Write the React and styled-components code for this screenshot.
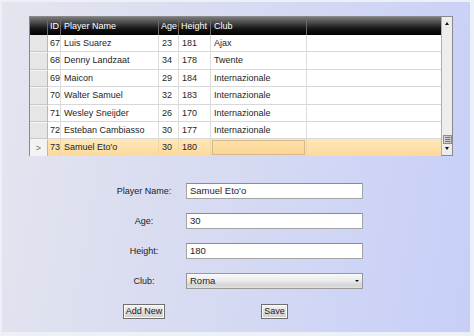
import React from "react";
import styled, { createGlobalStyle } from "styled-components";

const Global = createGlobalStyle`
  html, body { margin: 0; padding: 0; background: #eef0f8; }
  body { font-family: "Liberation Sans", Arial, sans-serif; }
  * { box-sizing: border-box; }
`;

const Panel = styled.div`
  margin: 2px 4px 0 2px;
  height: 330px;
  padding: 14px 0 0 27px;
  background: linear-gradient(100deg, #e4e5ee 0%, #d6daf2 50%, #c7cff8 100%);
`;

const Grid = styled.div`
  width: 424px;
  height: 140px;
  border: 1px solid #8a8a8a;
  display: flex;
  background: #fff;
`;

const Body = styled.div`
  flex: 1;
  display: flex;
  flex-direction: column;
`;

const COLS = "18px 13px 98px 20px 32px 96px 1fr";

const HeaderRow = styled.div`
  display: grid;
  grid-template-columns: ${COLS};
  height: 18px;
  background: linear-gradient(#7a7a7a 0%, #444 35%, #161616 65%, #000 100%);
`;

const HeadCell = styled.div`
  border-right: 1px solid #6a6a6a;
  color: #fff;
  font-size: 9px;
  line-height: 18px;
  padding-left: ${(p) => (p.$tight ? 2 : 3)}px;
  white-space: nowrap;
  overflow: hidden;
  &:last-child { border-right: none; }
`;

const Row = styled.div`
  display: grid;
  grid-template-columns: ${COLS};
  height: 17.4px;
  border-bottom: 1px solid ${(p) => (p.$sel ? "#f2d49c" : "#d8d8d8")};
  background: ${(p) => (p.$sel ? "linear-gradient(#fee7b8, #fcd99c)" : "#fff")};
  &:last-child { border-bottom: none; }
`;

const Cell = styled.div`
  border-right: 1px solid ${(p) => (p.$sel ? "#f0d7a6" : "#dcdcdc")};
  color: #1e1e1e;
  font-size: 9px;
  line-height: 16.4px;
  padding-left: ${(p) => (p.$tight ? 2 : 3)}px;
  white-space: nowrap;
  overflow: hidden;
  &:last-child { border-right: none; }
`;

const EditCell = styled(Cell)`
  padding: 0;
`;

const RowHead = styled.div`
  border-right: 1px solid #b8b8b8;
  border-top: ${(p) => (p.$first ? "none" : "1px solid #f6f6f6")};
  background: ${(p) => (p.$sel ? "#f3f3f3" : "#e6e6e6")};
  color: #6a6a6a;
  font-size: 9px;
  line-height: 16px;
  text-align: center;
  margin-bottom: ${(p) => (p.$sel ? 0 : "-1px")};
  border-bottom: ${(p) => (p.$sel ? "none" : "1px solid #c8c8c8")};
`;

const EditBox = styled.div`
  margin: 1px 1px 0 1px;
  height: 15px;
  border: 1px solid #d6b986;
  background: linear-gradient(#fde0a8, #fbd696);
`;

const Scroll = styled.div`
  width: 11px;
  border-left: 1px solid #b0b0b0;
  background: #ededed;
  display: flex;
  flex-direction: column;
  align-items: center;
`;

const Arrow = styled.div`
  width: 0;
  height: 0;
  border-left: 2.5px solid transparent;
  border-right: 2.5px solid transparent;
  ${(p) =>
    p.$up
      ? "border-bottom: 3px solid #111; margin-top: 5px;"
      : "border-top: 3px solid #111; margin-top: 3px; margin-bottom: 5px;"}
`;

const Track = styled.div`
  flex: 1;
`;

const Thumb = styled.div`
  width: 9px;
  height: 9px;
  border: 1px solid #8e8e8e;
  background: linear-gradient(90deg, #d8d8d8, #bdbdbd);
  display: flex;
  flex-direction: column;
  justify-content: center;
  gap: 1px;
  padding: 0 1px;
  span { display: block; height: 1px; background: #777; }
`;

const Form = styled.div`
  margin: 27px 0 0 85px;
  display: grid;
  grid-template-columns: 60px 177px;
  column-gap: 12px;
  row-gap: 14px;
  align-items: center;
`;

const Label = styled.div`
  font-size: 9px;
  color: #222;
  text-align: center;
  height: 16px;
  line-height: 16px;
`;

const Input = styled.div`
  height: 16px;
  border: 1px solid #a4a4a4;
  border-top-color: #8c8c8c;
  background: #fff;
  font-size: 9.5px;
  line-height: 14px;
  padding-left: 3px;
  color: #1e1e1e;
`;

const Select = styled.div`
  height: 16px;
  border: 1px solid #999;
  background: linear-gradient(#fafafa 0%, #ececec 45%, #d4d4d4 80%, #e2e2e2 100%);
  font-size: 9.5px;
  line-height: 14px;
  padding-left: 3px;
  color: #1e1e1e;
  display: flex;
  justify-content: space-between;
  align-items: center;
  padding-right: 3px;
`;

const Caret = styled.div`
  width: 0;
  height: 0;
  border-left: 2px solid transparent;
  border-right: 2px solid transparent;
  border-top: 2px solid #111;
`;

const ButtonCell = styled.div`
  display: flex;
  justify-content: center;
  margin-top: 1px;
`;

const Button = styled.div`
  height: 15px;
  padding: 0 2px;
  border: 1px solid #707070;
  background: linear-gradient(#f6f6f6, #dedede 50%, #cfcfcf);
  font-size: 9px;
  line-height: 13px;
  color: #222;
  box-shadow: inset 0 0 0 1px #fafafa;
`;

const players = [
  [67, "Luis Suarez", 23, 181, "Ajax"],
  [68, "Denny Landzaat", 34, 178, "Twente"],
  [69, "Maicon", 29, 184, "Internazionale"],
  [70, "Walter Samuel", 32, 183, "Internazionale"],
  [71, "Wesley Sneijder", 26, 170, "Internazionale"],
  [72, "Esteban Cambiasso", 30, 177, "Internazionale"],
];

export default function App() {
  return (
    <>
      <Global />
      <Panel>
        <Grid>
          <Body>
            <HeaderRow>
              <HeadCell />
              <HeadCell $tight>ID</HeadCell>
              <HeadCell>Player Name</HeadCell>
              <HeadCell $tight>Age</HeadCell>
              <HeadCell $tight>Height</HeadCell>
              <HeadCell>Club</HeadCell>
              <HeadCell />
            </HeaderRow>
            {players.map((p, i) => (
              <Row key={p[0]}>
                <RowHead $first={i === 0} />
                <Cell $tight>{p[0]}</Cell>
                <Cell>{p[1]}</Cell>
                <Cell>{p[2]}</Cell>
                <Cell>{p[3]}</Cell>
                <Cell>{p[4]}</Cell>
                <Cell />
              </Row>
            ))}
            <Row $sel>
              <RowHead $sel>&gt;</RowHead>
              <Cell $sel $tight>73</Cell>
              <Cell $sel>Samuel Eto'o</Cell>
              <Cell $sel>30</Cell>
              <Cell $sel>180</Cell>
              <EditCell $sel>
                <EditBox />
              </EditCell>
              <Cell $sel />
            </Row>
          </Body>
          <Scroll>
            <Arrow $up />
            <Track />
            <Thumb>
              <span />
              <span />
              <span />
            </Thumb>
            <Arrow />
          </Scroll>
        </Grid>
        <Form>
          <Label>Player Name:</Label>
          <Input>Samuel Eto'o</Input>
          <Label>Age:</Label>
          <Input>30</Input>
          <Label>Height:</Label>
          <Input>180</Input>
          <Label>Club:</Label>
          <Select>
            Roma
            <Caret />
          </Select>
          <ButtonCell>
            <Button>Add New</Button>
          </ButtonCell>
          <ButtonCell>
            <Button>Save</Button>
          </ButtonCell>
        </Form>
      </Panel>
    </>
  );
}
